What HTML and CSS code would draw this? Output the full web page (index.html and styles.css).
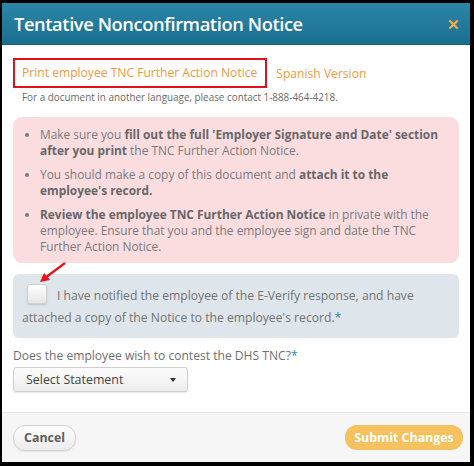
FILE: index.html
```html
<!DOCTYPE html>
<html>
<head>
<meta charset="utf-8">
<link rel="stylesheet" href="styles.css">
</head>
<body>
<div class="modal">
  <div class="header">
    <span class="title">Tentative Nonconfirmation Notice</span>
    <span class="close">&#x2715;</span>
  </div>
  <div class="body">
    <div class="links">
      <span class="link boxed">Print employee TNC Further Action Notice</span>
      <span class="link">Spanish Version</span>
    </div>
    <div class="note">For a document in another language, please contact 1-888-464-4218.</div>
    <div class="alert">
      <ul>
        <li>Make sure you <b>fill out the full 'Employer Signature and Date' section after you print</b> the TNC Further Action Notice.</li>
        <li>You should make a copy of this document and <b>attach it to the employee's record.</b></li>
        <li><b>Review the employee TNC Further Action Notice</b> in private with the employee. Ensure that you and the employee sign and date the TNC Further Action Notice.</li>
      </ul>
    </div>
    <div class="confirm">
      <span class="checkbox"></span>I have notified the employee of the E-Verify response, and have attached a copy of the Notice to the employee's record.<span class="req">*</span>
      <svg class="arrow" width="30" height="24" viewBox="0 0 30 24"><line x1="27" y1="2" x2="7" y2="17" stroke="#e8141c" stroke-width="2.2"/><polygon points="2,21 6,12 12,19" fill="#e8141c"/></svg>
    </div>
    <div class="question">Does the employee wish to contest the DHS TNC?<span class="req">*</span></div>
    <div class="select"><span>Select Statement</span><span class="caret"></span></div>
  </div>
  <div class="footer">
    <span class="btn cancel">Cancel</span>
    <span class="btn submit">Submit Changes</span>
  </div>
</div>
</body>
</html>
```

FILE: styles.css
```css
html, body { margin: 0; padding: 0; }
body {
  background: #000;
  width: 474px;
  height: 466px;
  font-family: "Open Sans", "Liberation Sans", sans-serif;
  overflow: hidden;
}
.modal {
  margin: 3px 0 0 2px;
  width: 468px;
  height: 459px;
  background: #fff;
  display: flex;
  flex-direction: column;
}
.header {
  height: 41px;
  background: linear-gradient(#2b86a8, #1a6f90);
  display: flex;
  align-items: center;
  justify-content: space-between;
  padding: 0 10px 0 12px;
  border-bottom: 1px solid #14607d;
}
.title {
  color: #fff;
  font-size: 18.3px;
  font-weight: 600;
  letter-spacing: -0.4px;
}
.close {
  color: #f0b040;
  font-size: 15px;
  font-weight: bold;
}
.body {
  padding: 13px 11px 0 11px;
  flex: 1;
}
.links {
  display: flex;
  align-items: center;
  gap: 9px;
}
.link {
  color: #f19a3e;
  font-size: 12.1px;
}
.boxed {
  border: 2px solid #e4101c;
  padding: 4px 8px 5px 7px;
}
.note {
  color: #6a6a6a;
  font-size: 9.9px;
  margin: 2px 0 0 9px;
}
.alert {
  margin-top: 13px;
  background: #fbdde0;
  border-radius: 9px;
  padding: 9px 10px 9px 0;
  color: #7a7a7a;
  font-size: 11.9px;
  line-height: 16px;
}
.alert ul {
  margin: 0;
  padding-left: 27px;
}
.alert li {
  margin-bottom: 8px;
}
.alert li:last-child { margin-bottom: 0; }
.alert b { color: #676767; font-weight: 700; }
.confirm {
  position: relative;
  margin-top: 11px;
  background: #dfe6eb;
  border-radius: 6px;
  padding: 10px 10px 9px 9px;
  color: #737373;
  font-size: 12.15px;
  line-height: 22px;
}
.checkbox {
  display: inline-block;
  width: 18px;
  height: 18px;
  border: 1px solid #d0d0d0;
  border-radius: 3px;
  background: linear-gradient(#fff, #e6e6e6);
  box-shadow: 0 1px 2px rgba(0,0,0,0.15);
  vertical-align: -4px;
  margin: 0 10px 0 5px;
}
.req { color: #2b86a8; }
.arrow {
  position: absolute;
  left: 25px;
  top: -13px;
}
.question {
  margin-top: 9px;
  color: #6f6f6f;
  font-size: 12.1px;
}
.select {
  margin-top: 3px;
  height: 23px;
  border: 1px solid #cfcfcf;
  border-radius: 3px;
  background: linear-gradient(#fdfdfd, #ececec);
  display: flex;
  align-items: center;
  justify-content: space-between;
  padding: 0 11px 0 12px;
  box-sizing: content-box;
  width: 150px;
  color: #444;
  font-size: 12.4px;
  box-shadow: 0 1px 1px rgba(0,0,0,0.08);
}
.caret {
  width: 0;
  height: 0;
  border-left: 3.5px solid transparent;
  border-right: 3.5px solid transparent;
  border-top: 4px solid #333;
}
.footer {
  height: 49px;
  border-top: 1px solid #e4e4e4;
  background: #f6f6f6;
  display: flex;
  align-items: center;
  justify-content: space-between;
  padding: 0 7px 0 11px;
}
.btn {
  height: 24px;
  border-radius: 12px;
  display: flex;
  align-items: center;
  justify-content: center;
  font-size: 12.4px;
  font-weight: 700;
}
.cancel {
  width: 61px;
  border: 1px solid #d2d2d2;
  background: linear-gradient(#fefefe, #ececec);
  color: #5e5e5e;
  box-shadow: 0 1px 1px rgba(0,0,0,0.08);
}
.submit {
  width: 118px;
  height: 25px;
  background: #f6c15f;
  color: #fff;
}
```
